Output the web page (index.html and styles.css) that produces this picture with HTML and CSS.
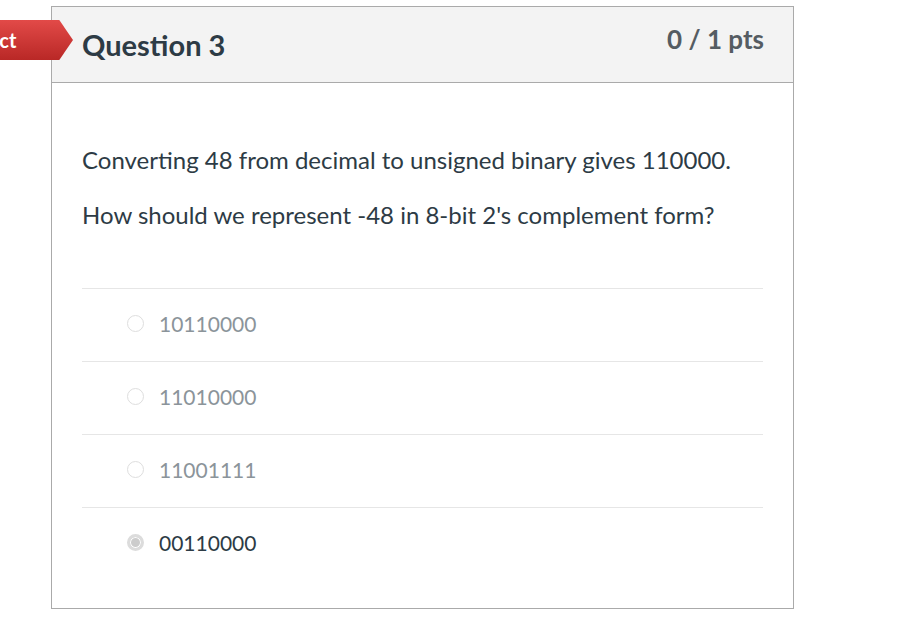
FILE: index.html
```html
<!DOCTYPE html>
<html lang="en">
<head>
    <meta charset="UTF-8">
    <meta name="viewport" content="width=device-width, initial-scale=1.0">
    <title>Question 3</title>
    <link rel="stylesheet" href="styles.css">
</head>
<body>
    <div class="page">
        <div class="question">
            <div class="answer-flag">Incorrect</div>

            <div class="question-header">
                <h2 class="question-name">Question 3</h2>
                <div class="question-points">0 / 1 pts</div>
            </div>

            <div class="question-body">
                <p class="question-text">Converting 48 from decimal to unsigned binary gives 110000.</p>
                <p class="question-text second">How should we represent -48 in 8-bit 2's complement form?</p>

                <div class="answers">
                    <div class="answer">
                        <span class="radio"></span>
                        <span class="answer-text">10110000</span>
                    </div>
                    <div class="answer">
                        <span class="radio"></span>
                        <span class="answer-text">11010000</span>
                    </div>
                    <div class="answer">
                        <span class="radio"></span>
                        <span class="answer-text">11001111</span>
                    </div>
                    <div class="answer selected">
                        <span class="radio"></span>
                        <span class="answer-text">00110000</span>
                    </div>
                </div>
            </div>
        </div>
    </div>
</body>
</html>
```

FILE: styles.css
```css
body {
    margin: 0;
    font-family: Lato, "Open Sans", sans-serif;
    color: #2d3b45;
    background: #fff;
}
.page {
    padding: 6px 0 0 51px;
}
.question {
    position: relative;
    width: 741px;
    border: 1px solid #aaaaaa;
}
/* flag sticks out past the left edge of the window, as in the quiz view */
.answer-flag {
    position: absolute;
    top: 13px;
    left: -116px;
    width: 137px;
    height: 40px;
    padding-right: 58px;
    box-sizing: border-box;
    text-align: right;
    line-height: 40px;
    font-size: 20px;
    font-weight: bold;
    color: #fff;
    background: linear-gradient(#e24a48, #b92826);
    clip-path: polygon(0 0, 90% 0, 100% 50%, 90% 100%, 0 100%);
}
.question-header {
    display: flex;
    justify-content: space-between;
    align-items: flex-start;
    height: 75px;
    padding: 0 29px 0 30px;
    background: #f3f3f3;
    border-bottom: 1px solid #aaaaaa;
}
.question-name {
    margin: 21px 0 0;
    font-size: 29px;
    line-height: 34px;
    font-weight: bold;
}
.question-points {
    margin-top: 17px;
    font-size: 26px;
    line-height: 30px;
    font-weight: bold;
    color: #555c62;
}
.question-body {
    padding: 62px 30px 28px;
}
.question-text {
    margin: 0;
    font-size: 24px;
    line-height: 30px;
}
.question-text.second {
    margin-top: 25px;
}
.answers {
    margin-top: 58px;
}
.answer {
    display: flex;
    align-items: center;
    height: 68px;
    padding: 0 0 4px 45px;
    border-top: 1px solid #e6e6e6;
}
.radio {
    width: 15px;
    height: 15px;
    margin-right: 15px;
    border: 1px solid #dedede;
    border-radius: 50%;
    background: #fff;
}
.answer.selected .radio {
    width: 11px;
    height: 11px;
    border: 3px solid #dcdcdc;
    background: #cccccc;
    box-shadow: inset 0 0 0 1px #fff;
}
.answer-text {
    font-size: 21px;
    color: #8b949a;
}
.answer.selected .answer-text {
    color: #2d3b45;
}
```
